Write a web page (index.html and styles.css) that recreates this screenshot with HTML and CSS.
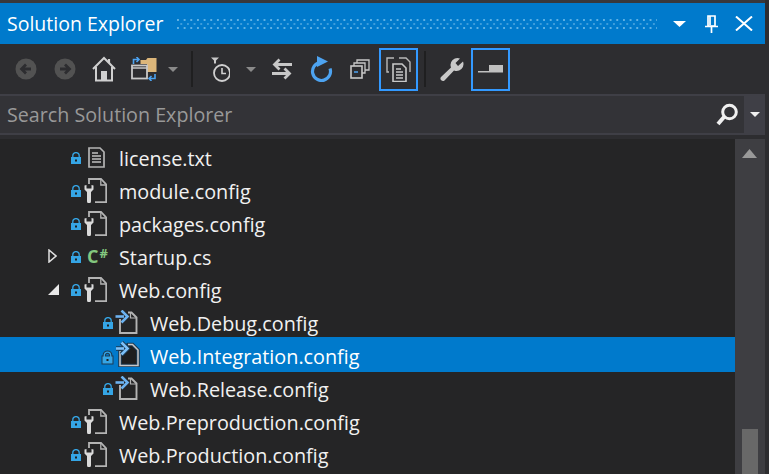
FILE: index.html
```html
<!DOCTYPE html>
<html lang="en">
<head>
<meta charset="utf-8">
<title>Solution Explorer</title>
<link rel="stylesheet" href="styles.css">
</head>
<body>
<svg class="defs" width="0" height="0" aria-hidden="true">
  <symbol id="lock" viewBox="0 0 10 12">
    <path d="M1.800 5.500V3.800a3.200 3.200 0 0 1 6.400 0v1.700" fill="none" stroke="#35a5e5" stroke-width="1.300"/>
    <rect x="0" y="5" width="10" height="7" fill="#35a5e5"/>
    <rect x="4" y="7.500" width="2" height="2" fill="#1e1e1e"/>
  </symbol>
  <symbol id="lock-sel" viewBox="-1.500 -1.500 13 15">
    <path d="M1.800 5.500V3.800a3.200 3.200 0 0 1 6.400 0v1.700" fill="none" stroke="#1c3a52" stroke-width="3.400"/>
    <rect x="-1" y="4" width="12" height="9" fill="#1c3a52"/>
    <path d="M1.800 5.500V3.800a3.200 3.200 0 0 1 6.400 0v1.700" fill="none" stroke="#35a5e5" stroke-width="1.300"/>
    <rect x="0" y="5" width="10" height="7" fill="#35a5e5"/>
    <rect x="4" y="7.500" width="2" height="2" fill="#1e1e1e"/>
  </symbol>
  <symbol id="cfg" viewBox="0 0 23 25">
    <path d="M5 6V1H17L22.200 6.500V24.100H11" fill="none" stroke="#b4b4b4" stroke-width="1.800"/>
    <path d="M16.800 1V7H22" fill="none" stroke="#b4b4b4" stroke-width="1.300"/>
    <path d="M0.500 7.500V11.500L3 14V23.200A2 2 0 0 0 7 23.200V14L9.500 11.500V7.500L7.500 7V10.500H2.500V7z" fill="#dadada"/>
  </symbol>
  <symbol id="trf" viewBox="0 0 23 24">
    <path d="M5 9V23H21.500V7.500L16.500 2.500H13" fill="none" stroke="#b4b4b4" stroke-width="1.900"/>
    <path d="M15.500 2.500V8H21" fill="none" stroke="#b4b4b4" stroke-width="1.200"/>
    <path d="M0.500 6.500H9" fill="none" stroke="#6cb2f0" stroke-width="2.600"/>
    <path d="M6.500 0.500L12.500 6.500L6.500 12.500" fill="none" stroke="#6cb2f0" stroke-width="2.600"/>
  </symbol>
  <symbol id="trf-sel" viewBox="0 0 25 26">
    <path d="M5 10V24.500H23V9L17.500 3.500H13z" fill="#1e1e1e" stroke="#1c3a52" stroke-width="3.600"/>
    <path d="M5 10V24.500H23V9L17.500 3.500H13" fill="none" stroke="#c8c8c8" stroke-width="1.500"/>
    <path d="M1 7.500H9M6.500 1.500L12.500 7.500L6.500 13.500" fill="none" stroke="#1c3a52" stroke-width="4.600"/>
    <path d="M1 7.500H9" fill="none" stroke="#7cc0f8" stroke-width="2.600"/>
    <path d="M6.500 1.500L12.500 7.500L6.500 13.500" fill="none" stroke="#7cc0f8" stroke-width="2.600"/>
  </symbol>
</svg>

<main class="panel">
  <header class="titlebar">
    <h1 class="title">Solution Explorer</h1>
    <div class="grip"></div>
    <svg class="tb-caret" width="13" height="6" viewBox="0 0 13 6"><path d="M0 0H13L6.500 6z" fill="#fff"/></svg>
    <svg class="tb-pin" width="13" height="18" viewBox="0 0 13 18"><path d="M3 1H10V11H3z M5 1V10" fill="none" stroke="#fff" stroke-width="1.700"/><path d="M0 11.500H13M6.500 11.500V18" stroke="#fff" stroke-width="1.700"/></svg>
    <svg class="tb-x" width="18" height="15" viewBox="0 0 18 15"><path d="M1 0.500L17 14.500M17 0.500L1 14.500" stroke="#fff" stroke-width="2"/></svg>
  </header>

  <nav class="toolbar">
    <span class="btn w39"><svg width="22" height="22" viewBox="0 0 22 22"><circle cx="11" cy="11" r="10.500" fill="#525252"/><path d="M16 11H7M11 6.500L6.500 11L11 15.500" fill="none" stroke="#2d2d30" stroke-width="2.800"/></svg></span>
    <span class="btn w39"><svg width="22" height="22" viewBox="0 0 22 22"><circle cx="11" cy="11" r="10.500" fill="#525252"/><path d="M6 11H15M11 6.500L15.500 11L11 15.500" fill="none" stroke="#2d2d30" stroke-width="2.800"/></svg></span>
    <span class="btn w39"><svg width="24" height="26" viewBox="0 0 24 26"><path d="M1 13L12 2L23 13" fill="none" stroke="#d0d0d0" stroke-width="2"/><path d="M17 3V7" stroke="#d0d0d0" stroke-width="2.200"/><path d="M4 11V24.500H20V11" fill="none" stroke="#d0d0d0" stroke-width="2"/><rect x="9" y="15" width="6" height="9" fill="#d0d0d0"/></svg></span>
    <span class="btn w42"><svg width="26" height="24" viewBox="0 0 26 24"><path d="M9.500 3H15L16.500 1H25.500V15H16V7H9.500z" fill="#dcb67a"/><rect x="1" y="8.500" width="15" height="13" fill="#2d2d30" stroke="#c8c8c8" stroke-width="1.800"/><path d="M1 11H16" stroke="#c8c8c8" stroke-width="1.500"/><path d="M2.500 7V2.500H7M5.500 0L8 2.500L5.500 5" fill="none" stroke="#4da3f0" stroke-width="1.600"/><path d="M24 17V21.500H19M20.500 19L18 21.500L20.500 24" fill="none" stroke="#4da3f0" stroke-width="1.600"/></svg></span>
    <span class="btn caret-w"><svg width="10" height="5" viewBox="0 0 10 5"><path d="M0 0H10L5 5z" fill="#8a8a8a"/></svg></span>
    <span class="sep sep-a"></span>
    <span class="btn w40"><svg width="26" height="25" viewBox="0 0 26 25"><path d="M7 0.500H15L12 3.500V6.500H10V3.500z" fill="#c8c8c8"/><circle cx="18" cy="16" r="8" fill="none" stroke="#d0d0d0" stroke-width="1.800"/><path d="M18 11V16.500H22" fill="none" stroke="#d0d0d0" stroke-width="1.600"/></svg></span>
    <span class="btn caret-w gap-c"><svg width="10" height="5" viewBox="0 0 10 5"><path d="M0 0H10L5 5z" fill="#8a8a8a"/></svg></span>
    <span class="btn w40 gap-d"><svg width="22" height="22" viewBox="0 0 22 22"><path d="M21 6.500H3M8.500 1.500L3.500 6.500L8.500 11.500" fill="none" stroke="#c8c8c8" stroke-width="2.800"/><path d="M1 15.500H19M13.500 10.500L18.500 15.500L13.500 20.500" fill="none" stroke="#c8c8c8" stroke-width="2.800"/></svg></span>
    <span class="btn w39"><svg width="23" height="26" viewBox="0 0 23 26"><path d="M10 6.600A9 9 0 1 0 20 12.500" fill="none" stroke="#4da3f0" stroke-width="3.200"/><path d="M7 0L18 5.500L7 11z" fill="#4da3f0"/></svg></span>
    <span class="btn w38"><svg width="20" height="20" viewBox="0 0 20 20"><rect x="1" y="7" width="11" height="12" fill="none" stroke="#c8c8c8" stroke-width="1.600"/><path d="M4 7V4H15V14H12M7 4V1H19V11H15" fill="none" stroke="#c8c8c8" stroke-width="1.300"/><path d="M4 13H8" stroke="#4da3f0" stroke-width="1.500"/></svg></span>
    <span class="btn boxed"><svg width="25" height="25" viewBox="0 0 25 25"><path d="M3 15H1V1H8M13 1H20L24 5V15" fill="none" stroke="#b8b8b8" stroke-width="1.400"/><path d="M7 7H16L20 11V24.500H7z" fill="#2d2d30" stroke="#c8c8c8" stroke-width="1.600"/><path d="M10 12H15M10 15H17M10 18H17M10 21H17" stroke="#c8c8c8" stroke-width="1.300"/></svg></span>
    <span class="sep sep-b"></span>
    <span class="btn w39 gap-e"><svg width="25" height="25" viewBox="0 0 25 25"><path d="M2 20L12 10.500A7 7 0 0 1 21 1.500L16.500 6L19 9L24 4.500A7 7 0 0 1 15 13.500L5.500 23.500A2.500 2.500 0 0 1 2 20z" fill="#c8c8c8"/></svg></span>
    <span class="btn boxed"><svg width="25" height="8" viewBox="0 0 25 8"><path d="M11 0H25V7H11z" fill="#c0c0c0"/><path d="M0 6H25V7.500H0z" fill="#c0c0c0"/></svg></span>
  </nav>

  <div class="searchbar">
    <div class="search-field">
      <span class="search-text">Search Solution Explorer</span>
      <svg width="22" height="24" viewBox="0 0 22 24"><circle cx="13.500" cy="9" r="6.800" fill="none" stroke="#f0f0f0" stroke-width="3"/><path d="M8 14L2 21" stroke="#f0f0f0" stroke-width="4"/></svg>
    </div>
    <div class="search-drop"><svg width="10" height="5" viewBox="0 0 10 5"><path d="M0 0H10L5 5z" fill="#f0f0f0"/></svg></div>
  </div>

  <section class="body">
    <ul class="tree">
      <li class="row l1"><span class="arrow"></span><svg class="lock"><use href="#lock"/></svg><span class="icon txt"><svg width="17" height="21" viewBox="0 0 17 21"><path d="M1 1H12L16 5V20H1z" fill="none" stroke="#b4b4b4" stroke-width="1.700"/><path d="M4 6H10M4 9H13M4 12H13M4 15H13" stroke="#c0c0c0" stroke-width="1.500"/></svg></span><span class="label">license.txt</span></li>
      <li class="row l1"><span class="arrow"></span><svg class="lock"><use href="#lock"/></svg><svg class="icon cfg"><use href="#cfg"/></svg><span class="label">module.config</span></li>
      <li class="row l1"><span class="arrow"></span><svg class="lock"><use href="#lock"/></svg><svg class="icon cfg"><use href="#cfg"/></svg><span class="label">packages.config</span></li>
      <li class="row l1"><span class="arrow"><svg width="9" height="14" viewBox="0 0 9 14"><path d="M1 1L8 7L1 13z" fill="none" stroke="#e0e0e0" stroke-width="1.500"/></svg></span><svg class="lock"><use href="#lock"/></svg><span class="icon csharp"><span class="cs-c">C</span><span class="cs-h">#</span></span><span class="label">Startup.cs</span></li>
      <li class="row l1"><span class="arrow"><svg width="11" height="11" viewBox="0 0 11 11"><path d="M11 0V11H0z" fill="#e8e8e8"/></svg></span><svg class="lock"><use href="#lock"/></svg><svg class="icon cfg"><use href="#cfg"/></svg><span class="label">Web.config</span></li>
      <li class="row l2"><svg class="lock"><use href="#lock"/></svg><svg class="icon trf"><use href="#trf"/></svg><span class="label">Web.Debug.config</span></li>
      <li class="row l2 selected"><svg class="lock-s"><use href="#lock-sel"/></svg><svg class="trf-s"><use href="#trf-sel"/></svg><span class="label">Web.Integration.config</span></li>
      <li class="row l2"><svg class="lock"><use href="#lock"/></svg><svg class="icon trf"><use href="#trf"/></svg><span class="label">Web.Release.config</span></li>
      <li class="row l1"><span class="arrow"></span><svg class="lock"><use href="#lock"/></svg><svg class="icon cfg"><use href="#cfg"/></svg><span class="label">Web.Preproduction.config</span></li>
      <li class="row l1"><span class="arrow"></span><svg class="lock"><use href="#lock"/></svg><svg class="icon cfg"><use href="#cfg"/></svg><span class="label">Web.Production.config</span></li>
    </ul>
    <aside class="scrollbar">
      <svg class="scroll-up" width="15" height="9" viewBox="0 0 15 9"><path d="M7.500 0L15 9H0z" fill="#999"/></svg>
      <div class="thumb"></div>
    </aside>
  </section>
</main>
</body>
</html>
```

FILE: styles.css
```css
* { box-sizing: border-box; }
html, body { margin: 0; height: 100%; }
body {
  width: 769px;
  height: 474px;
  overflow: hidden;
  background: #2d2d30;
  font-family: "Open Sans", "Noto Sans", sans-serif;
  color: #f1f1f1;
}
.defs { position: absolute; }
.panel {
  width: 765px;
  height: 474px;
  border-top: 3px solid #38383c;
  display: flex;
  flex-direction: column;
  overflow: hidden;
  background: #2d2d30;
}
.titlebar {
  flex: 0 0 41px;
  display: flex;
  align-items: center;
  padding-left: 7px;
  background: #007acc;
}
.title {
  margin: 0;
  width: 156px;
  font-size: 19.5px;
  font-weight: 400;
  color: #fff;
  white-space: nowrap;
}
.grip {
  width: 480px;
  height: 10px;
  margin-left: 14px;
  background-image:
    radial-gradient(circle at 1px 1px, #5fb1e4 1px, transparent 1.3px),
    radial-gradient(circle at 1px 1px, #3d9ddc 1px, transparent 1.3px);
  background-size: 6.67px 8px;
  background-position: 0 0, 3.33px 4px;
}
.tb-caret { margin-left: 16px; }
.tb-pin { margin-left: 19px; }
.tb-x { margin-left: 17px; }

.toolbar {
  flex: 0 0 50px;
  display: flex;
  align-items: center;
  padding-left: 6px;
}
.btn { display: flex; align-items: center; justify-content: center; height: 43px; }
.w38 { width: 38px; }
.w39 { width: 39px; }
.w40 { width: 40px; }
.w42 { width: 42px; }
.caret-w { width: 16px; }
.boxed { width: 39px; border: 2px solid #3399ff; }
.sep { width: 2px; height: 36px; background: #1f1f20; }
.sep-a { margin: 0 4px 0 10px; }
.sep-b { margin-left: 6px; }
.gap-c { margin-left: 6px; }
.gap-d { margin-left: 3px; }
.gap-e { margin-left: 6px; }

.searchbar {
  flex: 0 0 41px;
  display: flex;
  border-top: 2px solid #3f3f46;
  border-bottom: 2px solid #3f3f46;
}
.search-field {
  flex: 1;
  display: flex;
  align-items: center;
  justify-content: space-between;
  padding: 0 6px 0 7px;
  background: #333337;
}
.search-text { font-size: 19.7px; color: #999; }
.search-drop {
  flex: 0 0 21px;
  display: flex;
  align-items: center;
  justify-content: center;
  background: #3f3f46;
}

.body {
  flex: 1;
  display: flex;
  min-height: 0;
  margin-top: 4px;
  background: #252526;
}
.tree {
  flex: 1;
  margin: 0;
  padding: 2px 0 0;
  list-style: none;
}
.row {
  display: flex;
  align-items: center;
  height: 33px;
  padding-top: 3px;
}
.l1 { padding-left: 48px; }
.l2 { padding-left: 103px; }
.arrow { display: flex; width: 23px; margin-top: -4px; }
.lock { flex: 0 0 10px; width: 10px; height: 12px; margin-top: -2px; }
.l1 .lock { margin-right: 3px; }
.l2 .lock { margin-right: 2px; }
.lock-s { flex: 0 0 13px; width: 13px; height: 15px; margin-left: -2px; margin-right: 1px; }
.icon { display: flex; align-items: center; justify-content: center; flex: 0 0 23px; min-width: 0; }
.txt { padding-left: 1px; margin-top: -3px; }
.cfg { width: 23px; height: 25px; margin-top: -3px; }
.trf { width: 23px; height: 24px; margin-top: -5px; }
.trf-s { flex: 0 0 25px; width: 25px; height: 26px; margin-top: -6px; }
.label { margin-top: -2px; font-size: 19.8px; white-space: nowrap; color: #f1f1f1; }
.l1 .label { margin-left: 12px; }
.l2 .label { margin-left: 12px; }
.selected .label { margin-left: 10px; color: #fff; }
.csharp { align-items: flex-start; justify-content: flex-start; padding-left: 3px; margin-top: -4px; color: #83c77f; font-weight: 700; line-height: 1; }
.cs-c { font-size: 18px; }
.cs-h { font-size: 13px; margin-left: 1px; }
.selected { background: #007acc; box-shadow: 0 -2px 0 #007acc; }

.scrollbar {
  flex: 0 0 30px;
  position: relative;
  background: #3e3e42;
}
.scroll-up { position: absolute; left: 7px; top: 10px; }
.thumb { position: absolute; left: 7px; top: 290px; width: 16px; height: 60px; background: #686868; }
```
